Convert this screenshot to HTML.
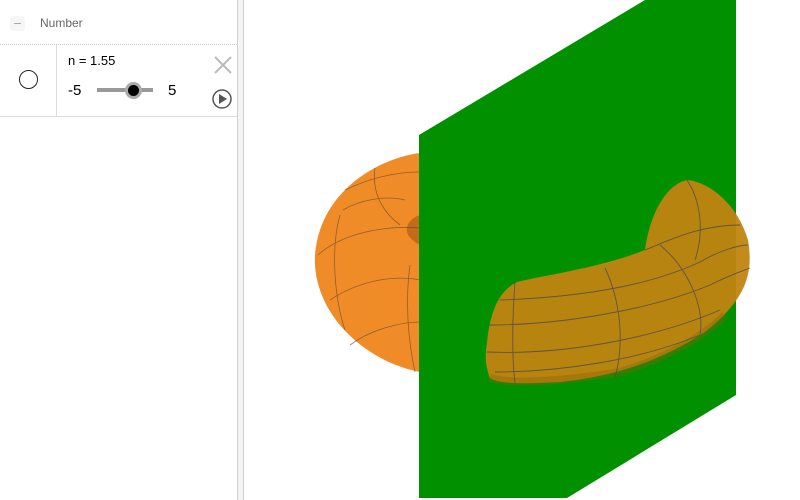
<!DOCTYPE html>
<html><head><style>
body{margin:0;width:800px;height:500px;overflow:hidden;background:#fff;font-family:"Liberation Sans",sans-serif;position:relative}
.abs{position:absolute}
</style></head><body>
<div class="abs" style="left:237px;top:0;width:7px;height:500px;background:#f4f4f4;border-left:1px solid #d0d0d0;border-right:1px solid #d0d0d0;box-sizing:border-box"></div>
<div class="abs" style="left:10px;top:16px;width:15px;height:15px;border-radius:3px;background:#f6f6f6"></div>
<div class="abs" style="left:14px;top:23px;width:7px;height:1px;background:#aaa"></div>
<div class="abs" style="left:40px;top:16px;font-size:12px;color:#666">Number</div>
<div class="abs" style="left:0;top:44px;width:237px;border-top:1px dotted #ccc"></div>
<div class="abs" style="left:56px;top:45px;width:1px;height:72px;background:#ddd"></div>
<div class="abs" style="left:0;top:116px;width:237px;height:1px;background:#ddd"></div>
<div class="abs" style="left:19px;top:70px;width:19px;height:19px;border:1px solid #222;border-radius:50%;box-sizing:border-box"></div>
<div class="abs" style="left:68px;top:53px;font-size:13px;color:#000">n = 1.55</div>
<div class="abs" style="left:68px;top:82px;font-size:15px;color:#000">-5</div>
<div class="abs" style="left:168px;top:82px;font-size:15px;color:#000">5</div>
<div class="abs" style="left:97px;top:88px;width:56px;height:4px;background:#999"></div>
<div class="abs" style="left:125px;top:82px;width:17px;height:17px;border-radius:50%;background:#aaa"></div>
<div class="abs" style="left:128px;top:85px;width:11px;height:11px;border-radius:50%;background:#000"></div>
<svg class="abs" style="left:0;top:0" width="800" height="500">
<path d="M215 57L231 73M231 57L215 73" stroke="#bbb" stroke-width="2"/>
<circle cx="222" cy="99" r="9" fill="none" stroke="#555" stroke-width="1.5"/>
<path d="M219 94L227 99L219 104Z" fill="#555"/>
<path d="M420 153 C380 158 320 190 315 255 C312 310 360 360 420 372 Z" fill="#f08c28"/>
<path d="M420 215 C405 220 400 235 420 245 Z" fill="#c06c18"/>
<g fill="none" stroke="#6a4a30" stroke-width="0.8" opacity="0.7">
<path d="M318 255 C340 235 380 225 420 228"/><path d="M330 300 C360 280 395 275 420 280"/>
<path d="M350 345 C370 330 400 322 420 322"/><path d="M345 190 C370 178 395 172 420 172"/>
<path d="M343 210 C360 200 385 195 405 200"/>
<path d="M375 168 C372 190 380 210 400 225"/><path d="M340 215 C330 250 335 300 345 330"/>
<path d="M410 265 C405 300 408 340 415 372"/>
</g>
<polygon points="419,135 645,0 736,0 736,395 567,498 419,498" fill="#009000"/>
<path d="M487 343 C490 310 500 290 517 282 C540 276 600 268 645 250 C650 215 665 185 687 180 C710 182 738 205 748 240 C754 275 745 300 705 332 C665 358 620 376 560 382 C520 384 500 384 490 378 C485 365 485 355 487 343 Z" fill="#c08410" opacity="0.95"/>
<path d="M490 378 C510 384 560 382 620 372 C660 360 700 340 725 315" fill="none" stroke="#8e5e08" stroke-width="8" opacity="0.35"/>
<g fill="none" stroke="#4a4a50" stroke-width="0.9" opacity="0.8">
<path d="M500 300 C560 298 640 290 700 262 C720 250 740 245 748 245"/>
<path d="M489 325 C560 325 650 310 710 285 C730 275 745 270 750 268"/>
<path d="M487 352 C560 355 650 340 720 310"/>
<path d="M495 372 C560 372 640 360 700 335"/>
<path d="M515 282 C512 320 512 360 515 383"/>
<path d="M605 268 C620 300 625 340 615 378"/>
<path d="M660 245 C690 270 705 310 700 335"/>
<path d="M687 180 C700 200 705 230 695 260"/>
<path d="M645 250 C670 240 700 225 740 225"/>
</g>
</svg>
</body></html>
